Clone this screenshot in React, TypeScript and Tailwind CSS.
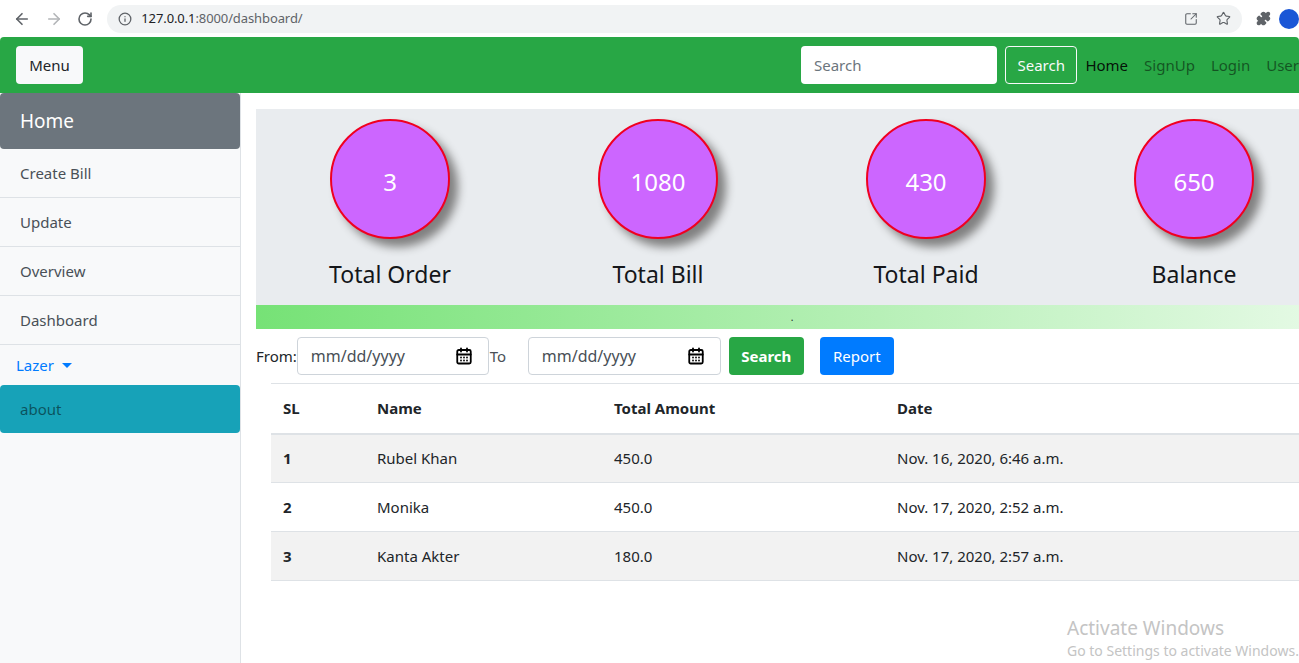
import { ArrowLeft, ArrowRight, RotateCw, Info, SquareArrowOutUpRight, Star, Puzzle, CalendarDays } from "lucide-react";

const stats = [
	{ value: "3", label: "Total Order" },
	{ value: "1080", label: "Total Bill" },
	{ value: "430", label: "Total Paid" },
	{ value: "650", label: "Balance" },
];

const menuLinks = ["Create Bill", "Update", "Overview", "Dashboard"];

const rows = [
	{ sl: 1, name: "Rubel Khan", amount: "450.0", date: "Nov. 16, 2020, 6:46 a.m." },
	{ sl: 2, name: "Monika", amount: "450.0", date: "Nov. 17, 2020, 2:52 a.m." },
	{ sl: 3, name: "Kanta Akter", amount: "180.0", date: "Nov. 17, 2020, 2:57 a.m." },
];

function DateField({ width }: { width: string }) {
	return (
		<div className={`${width} h-[38px] flex items-center justify-between pl-[13px] pr-[15px] bg-white border border-[#ced4da] rounded text-[#495057] text-[16px]`}>
			<span>mm/dd/yyyy</span>
			<CalendarDays className="w-[18px] h-[18px] text-black" strokeWidth={2.4} />
		</div>
	);
}

export default function App() {
	return (
		<div className="relative w-[1299px] h-[663px] overflow-hidden bg-white text-[#212529] font-['Noto_Sans',sans-serif]">
			{/* browser chrome */}
			<div className="h-[37px] flex items-center bg-white">
				<div className="w-[108px] flex items-center gap-[14px] pl-[13px] text-[#5f6368]">
					<ArrowLeft className="w-[18px] h-[18px]" strokeWidth={2.2} />
					<ArrowRight className="w-[18px] h-[18px] text-[#b3b5b8]" strokeWidth={2.2} />
					<RotateCw className="w-[16px] h-[16px]" strokeWidth={2.4} />
				</div>
				<div className="w-[1144px] h-[28px] flex items-center pl-[11px] pr-[11px] rounded-full bg-[#f1f3f4]">
					<Info className="w-[14px] h-[14px] text-[#5f6368]" strokeWidth={2.2} />
					<span className="ml-[9px] text-[13px] tracking-[-0.1px] text-[#5f6368]"><span className="text-[#202124]">127.0.0.1</span>:8000/dashboard/</span>
					<div className="ml-auto flex items-center gap-[18px] text-[#5f6368]">
						<SquareArrowOutUpRight className="w-[14px] h-[14px]" strokeWidth={1.8} />
						<Star className="w-[15px] h-[15px]" strokeWidth={1.8} />
					</div>
				</div>
				<Puzzle className="ml-[14px] w-[15px] h-[15px] fill-[#5f6368] text-[#5f6368]" />
				<div className="ml-[8px] w-[20px] h-[20px] shrink-0 rounded-full bg-[#1a56d6]" />
			</div>

			{/* navbar */}
			<nav className="h-[56px] flex items-center bg-[#28a745] rounded-t pl-4">
				<button className="w-[67px] h-[38px] bg-[#f8f9fa] rounded text-[15px] text-[#212529]">Menu</button>
				<div className="ml-auto flex items-center shrink-0 w-[498px]">
					<div className="w-[198px] h-[38px] flex items-center pl-[13px] bg-white rounded text-[15px] text-[#6c757d]">Search</div>
					<button className="ml-2 w-[73px] h-[38px] border border-[#f8f9fa] rounded text-[15px] text-[#f8f9fa]">Search</button>
					<div className="ml-2 flex gap-4 text-[15px] text-black/50 whitespace-nowrap">
						<span className="text-black/90">Home</span>
						<span>SignUp</span>
						<span>Login</span>
						<span>User</span>
					</div>
				</div>
			</nav>

			<div className="flex h-[570px]">
				{/* sidebar */}
				<aside className="w-[241px] shrink-0 bg-[#f8f9fa] border-r border-[#dee2e6] text-[15px]">
					<div className="h-[56px] flex items-center pl-5 bg-[#6c757d] rounded text-[19px] text-white">Home</div>
					{menuLinks.map((item) => (
						<div key={item} className="h-[49px] flex items-center pl-5 border-b border-[#dee2e6] text-[#495057]">{item}</div>
					))}
					<div className="h-[40px] flex items-center pl-4 text-[#007bff]">
						Lazer
						<span className="ml-[8px] w-0 h-0 border-x-[5px] border-x-transparent border-t-[5px] border-t-[#007bff]" />
					</div>
					<div className="h-[48px] flex items-center pl-5 bg-[#17a2b8] rounded text-black/50">about</div>
				</aside>

				{/* main */}
				<main className="flex-1 min-w-0 pl-[15px] pt-4">
					<div className="w-[1072px] h-[196px] grid grid-cols-4 bg-[#e9ecef] pt-[10px]">
						{stats.map((stat) => (
							<div key={stat.label} className="flex flex-col items-center">
								<div className="w-[120px] h-[120px] flex items-center justify-center rounded-full border-2 border-[#f00020] bg-[#cc66ff] shadow-[8px_8px_10px_#808080] text-[24px] text-white">
									<span className="mt-[6px]">{stat.value}</span>
								</div>
								<div className="mt-[17px] text-[23px] leading-[36px] text-[#14161a] whitespace-nowrap">{stat.label}</div>
							</div>
						))}
					</div>
					<div className="w-[1072px] h-6 flex items-center justify-center bg-[linear-gradient(to_right,#76e276,#e6fae6)] text-[10px] leading-none text-[#212529]">.</div>

					<div className="mt-2 h-[38px] flex items-center text-[15px] whitespace-nowrap">
						From:
						<DateField width="w-[192px]" />
						<span className="ml-[1px] w-[38px] text-[#495057]">To</span>
						<DateField width="w-[193px]" />
						<button className="ml-2 w-[75px] h-[38px] bg-[#28a745] rounded font-bold text-white">Search</button>
						<button className="ml-4 w-[74px] h-[38px] bg-[#007bff] rounded text-white">Report</button>
					</div>

					<table className="mt-2 ml-[15px] w-[1040px] table-fixed border-t border-[#dee2e6] text-[15px] text-left">
						<thead>
							<tr className="h-[50px] border-b-2 border-[#dee2e6]">
								<th className="w-[94px] pl-3 font-bold">SL</th>
								<th className="w-[237px] pl-3 font-bold">Name</th>
								<th className="w-[283px] pl-3 font-bold">Total Amount</th>
								<th className="pl-3 font-bold">Date</th>
							</tr>
						</thead>
						<tbody>
							{rows.map((row, idx) => (
								<tr key={row.sl} className={`h-[49px] border-b border-[#dee2e6] ${idx % 2 === 0 ? "bg-[#f2f2f2]" : ""}`}>
									<td className="pl-3 font-bold">{row.sl}</td>
									<td className="pl-3">{row.name}</td>
									<td className="pl-3">{row.amount}</td>
									<td className="pl-3">{row.date}</td>
								</tr>
							))}
						</tbody>
					</table>
				</main>
			</div>

			{/* windows watermark */}
			<div className="absolute left-[1067px] top-[616px] whitespace-nowrap text-[#c4c4c4]">
				<div className="text-[19px] leading-[25px]">Activate Windows</div>
				<div className="text-[14px] leading-[20px]">Go to Settings to activate Windows.</div>
			</div>
		</div>
	);
}
